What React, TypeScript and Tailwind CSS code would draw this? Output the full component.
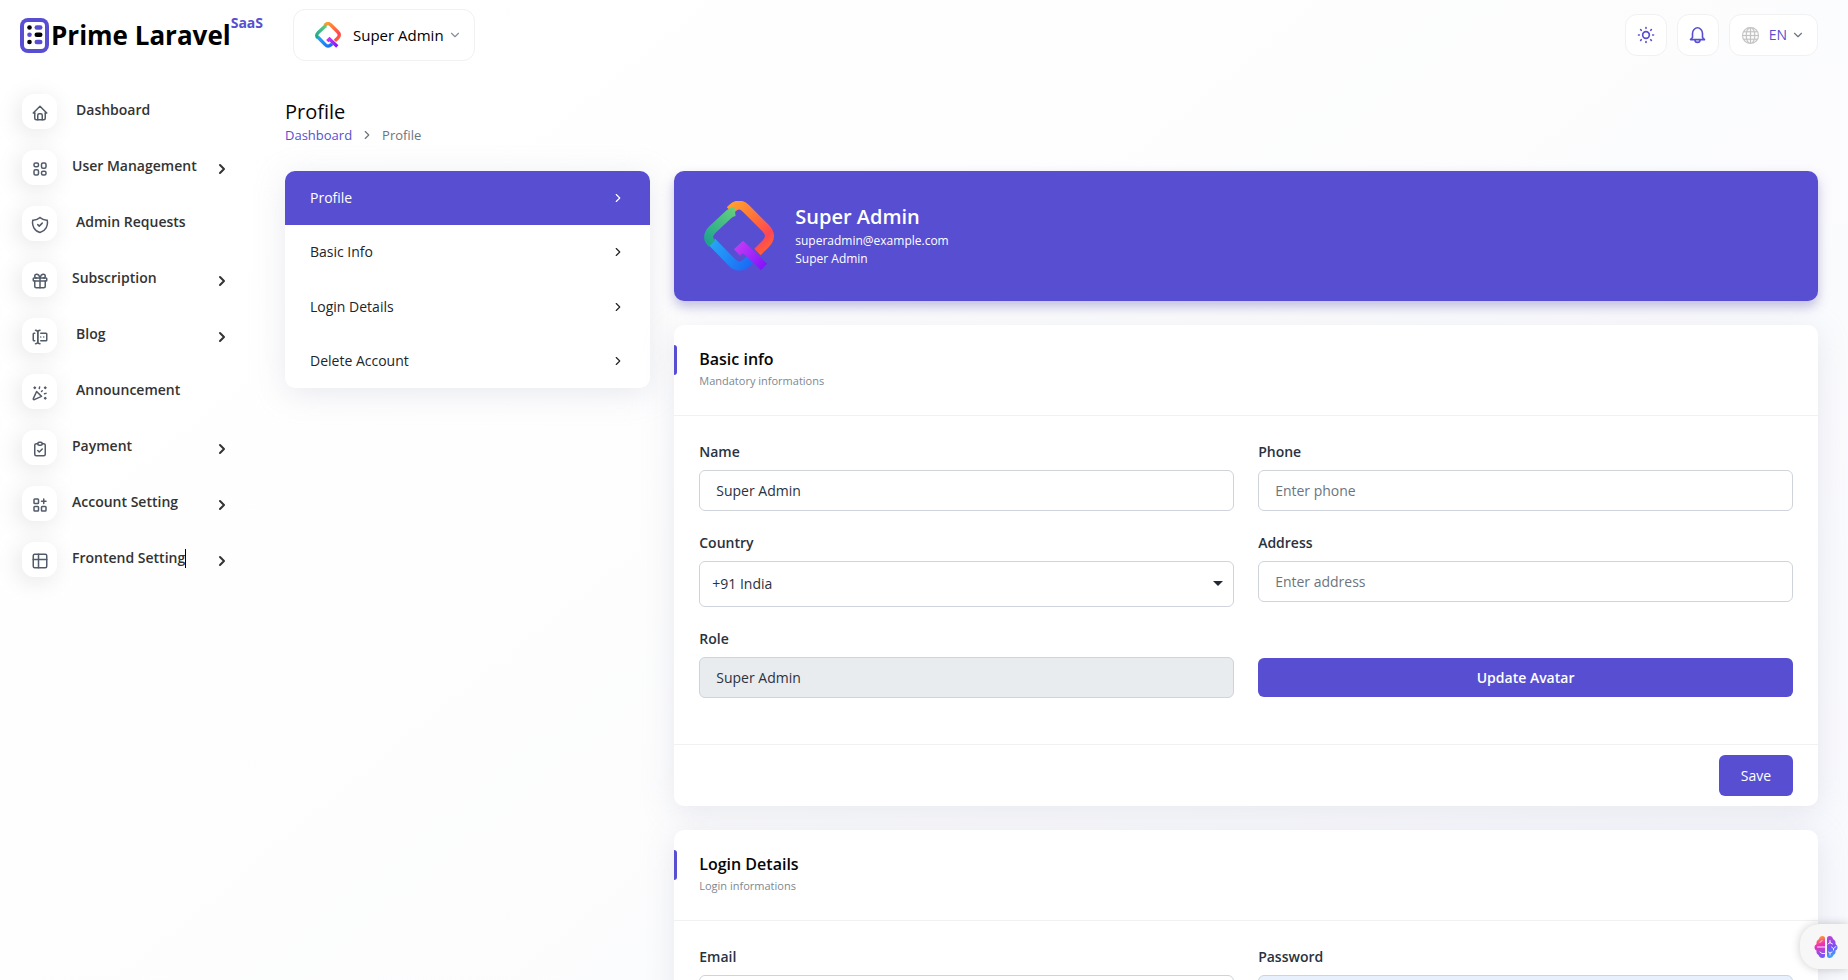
import { useId, useState } from 'react';
import type { ComponentType, ReactNode } from 'react';
import {
  TbApps,
  TbChevronDown,
  TbChevronRight,
  TbClipboardCheck,
  TbConfetti,
  TbForms,
  TbGift,
  TbHome,
  TbLayout2,
  TbSun,
  TbTable,
} from 'react-icons/tb';
import { BsGlobe } from 'react-icons/bs';

interface NavItem {
  label: string;
  icon: ComponentType<{ size?: number }>;
  hasChildren?: boolean;
  indent?: boolean;
  caret?: boolean;
}

const navItems: NavItem[] = [
  { label: 'Dashboard', icon: TbHome, indent: true },
  { label: 'User Management', icon: TbLayout2, hasChildren: true },
  { label: 'Admin Requests', icon: ShieldIcon, indent: true },
  { label: 'Subscription', icon: TbGift, hasChildren: true },
  { label: 'Blog', icon: TbForms, hasChildren: true, indent: true },
  { label: 'Announcement', icon: TbConfetti, indent: true },
  { label: 'Payment', icon: TbClipboardCheck, hasChildren: true },
  { label: 'Account Setting', icon: TbApps, hasChildren: true },
  { label: 'Frontend Setting', icon: TbTable, hasChildren: true, caret: true },
];

const sections = ['Profile', 'Basic Info', 'Login Details', 'Delete Account'];

const inputClass =
  'block h-[41px] w-full rounded-md border border-[#ced4da] bg-white px-4 text-sm text-[#293240] placeholder:text-[#6c757d] outline-none';

function ShieldIcon({ size = 18 }: { size?: number }) {
  return (
    <svg
      width={size}
      height={size}
      viewBox="0 0 24 24"
      fill="none"
      stroke="currentColor"
      strokeWidth="2"
      strokeLinecap="round"
      strokeLinejoin="round"
      aria-hidden="true"
    >
      <path d="M12 2a13 13 0 0 0 9.500 3.500a13.500 13.500 0 0 1 -9.500 16.500a13.500 13.500 0 0 1 -9.500 -16.500a13 13 0 0 0 9.500 -3.500" />
      <path d="M9 11.500l2 2l4 -4" />
    </svg>
  );
}

function BellIcon() {
  return (
    <svg
      width="17"
      height="18"
      viewBox="0 0 17 18"
      fill="none"
      stroke="currentColor"
      strokeWidth="1.6"
      strokeLinecap="round"
      strokeLinejoin="round"
      aria-hidden="true"
    >
      <path d="M3.500 11.500V7.500C3.500 4.500 6 1.800 8.500 1.800S13.500 4.500 13.500 7.500V11.500L15.500 13.600H1.500L3.500 11.500" />
      <path d="M6 14a2.500 2.400 0 0 0 5 0" />
    </svg>
  );
}

function BrandMark() {
  return (
    <svg width="29" height="35" viewBox="0 0 29 35" aria-hidden="true">
      <rect x="0" y="0" width="29" height="35" rx="8" fill="#584ed2" />
      <rect x="4" y="4" width="21" height="27" rx="4" fill="#fff" />
      <circle cx="9.5" cy="9.5" r="2.3" fill="#000" />
      <circle cx="9.5" cy="16.8" r="2.3" fill="#584ed2" />
      <circle cx="9.5" cy="24" r="2.3" fill="#000" />
      <rect x="14.5" y="7.2" width="8" height="4.6" rx="2.3" fill="#584ed2" />
      <rect x="14.5" y="14.5" width="8" height="4.6" rx="2.3" fill="#000" />
      <rect x="14.5" y="21.7" width="8" height="4.6" rx="2.3" fill="#584ed2" />
    </svg>
  );
}

function Avatar({ size }: { size: number }) {
  const id = useId();
  return (
    <svg width={size} height={size} viewBox="0 0 70 70" fill="none" strokeWidth="9" role="img" aria-label="Super Admin">
      <defs>
        <linearGradient id={`${id}o`} x1="26" y1="4" x2="64" y2="48" gradientUnits="userSpaceOnUse">
          <stop offset="0" stopColor="#ff9f2e" />
          <stop offset="0.5" stopColor="#ff6a3d" />
          <stop offset="0.8" stopColor="#ff4655" />
          <stop offset="1" stopColor="#ff6038" />
        </linearGradient>
        <linearGradient id={`${id}g`} x1="34" y1="8" x2="5" y2="42" gradientUnits="userSpaceOnUse">
          <stop offset="0" stopColor="#69d17c" />
          <stop offset="1" stopColor="#1fa58e" />
        </linearGradient>
        <linearGradient id={`${id}b`} x1="8" y1="40" x2="46" y2="64" gradientUnits="userSpaceOnUse">
          <stop offset="0" stopColor="#27a5f7" />
          <stop offset="1" stopColor="#1a6bf5" />
        </linearGradient>
        <linearGradient id={`${id}p`} x1="33" y1="46" x2="60" y2="66" gradientUnits="userSpaceOnUse">
          <stop offset="0" stopColor="#c03af5" />
          <stop offset="1" stopColor="#8413fa" />
        </linearGradient>
      </defs>
      <path d="M26 9.500 L28 7.500 Q35 0.500 42 7.500 L61.500 27 Q69.500 35 61.500 43 L53.500 51" stroke={`url(#${id}o)`} />
      <path d="M8 41 L27.500 61 Q35 69 43 61.500 L46 58.500" stroke={`url(#${id}b)`} />
      <path d="M31 10.500 Q27 11 24 14 L8.500 28.500 Q1 36 8 42.500" stroke={`url(#${id}g)`} />
      <path d="M33 51.500 L39 46 L60 66" stroke={`url(#${id}p)`} />
    </svg>
  );
}

function Brain() {
  return (
    <svg width="24" height="24" viewBox="0 0 24 24" fill="none" aria-hidden="true">
      <defs>
        <linearGradient id="brain-left" x1="3" y1="2" x2="9" y2="22" gradientUnits="userSpaceOnUse">
          <stop offset="0" stopColor="#ff9d2f" />
          <stop offset="0.4" stopColor="#f02fb4" />
          <stop offset="1" stopColor="#6b5cff" />
        </linearGradient>
        <linearGradient id="brain-right" x1="14" y1="2" x2="21" y2="22" gradientUnits="userSpaceOnUse">
          <stop offset="0" stopColor="#c13fd6" />
          <stop offset="0.5" stopColor="#7a52f4" />
          <stop offset="1" stopColor="#2fb0ff" />
        </linearGradient>
      </defs>
      <path
        d="M11 3.500 Q11 1 8.500 1 Q5.500 1 5 4 Q2 5.500 2.500 9 Q0 10.500 0.500 13 Q1 15 2.500 15.500 Q2 18.500 4.500 20 Q5.500 23 8.500 23 Q11 23 11 20.500 Z"
        fill="url(#brain-left)"
      />
      <path
        d="M13 3.500 Q13 1 15.500 1 Q18.500 1 19 4 Q22 5.500 21.500 9 Q24 10.500 23.500 13 Q23 15 21.500 15.500 Q22 18.500 19.500 20 Q18.500 23 15.500 23 Q13 23 13 20.500 Z"
        fill="url(#brain-right)"
      />
      <path
        d="M6 7.500 L8 5.500 M3.500 12 H11 M6 17 L8 18.500 H11 M16 5.500 V8 M14 9 L16 7.500 L18.500 9 M17.500 12 L19.500 13.500 L22 11.500 M19.500 13.500 V15 M14.500 17 L16 18 L18 17 M16 18 V20"
        stroke="#f3e8ff"
        strokeWidth="1"
        strokeLinecap="round"
      />
    </svg>
  );
}

function Header() {
  return (
    <header className="flex h-[70px] items-start justify-between pl-5 pr-[30px]">
      <div className="flex">
        <a href="#" className="mt-[18px] flex h-[35px] w-[273px] items-center text-black">
          <BrandMark />
          <span className="pl-[2px] text-[26px] font-bold leading-[35px]">Prime Laravel</span>
          <sup className="-top-[13px] text-sm font-bold leading-4 text-[#584ed2]">SaaS</sup>
        </a>
        <button className="mt-[9px] flex h-[52px] items-center rounded-xl border border-[#f1f1f1] bg-white pl-[21px] pr-3 text-[15px] font-medium text-black">
          <Avatar size={26} />
          <span className="pl-3 pr-1">Super Admin</span>
          <TbChevronDown size={14} className="text-[#8a8f98]" />
        </button>
      </div>
      <div className="mt-[14px] flex gap-[10px] text-[#584ed2]">
        <button
          aria-label="Theme"
          className="flex h-[42px] w-[42px] items-center justify-center rounded-xl border border-[#f1f1f1] bg-white"
        >
          <TbSun size={20} />
        </button>
        <button
          aria-label="Notifications"
          className="flex h-[42px] w-[42px] items-center justify-center rounded-xl border border-[#f1f1f1] bg-white"
        >
          <BellIcon />
        </button>
        <button className="flex h-[42px] items-center rounded-xl border border-[#f1f1f1] bg-white px-3 text-sm">
          <BsGlobe size={17} strokeWidth={0.2} className="text-[#c4c4c4]" />
          <span className="pl-[10px] pr-1">EN</span>
          <TbChevronDown size={14} className="text-[#6c757d]" />
        </button>
      </div>
    </header>
  );
}

function Sidebar() {
  return (
    <nav className="w-[285px] shrink-0 pl-[22px] pt-6">
      <ul className="flex flex-col gap-[21px]">
        {navItems.map((item) => {
          const Icon = item.icon;
          return (
            <li key={item.label}>
              <a href="#" className="flex h-[35px] w-[208px] items-start text-[#333]">
                <span className="flex h-[35px] w-[35px] items-center justify-center rounded-xl bg-white pt-[3px] text-[#525b69] shadow-[-3px_4px_23px_rgba(0,0,0,0.1)]">
                  <Icon size={18} />
                </span>
                <span
                  className={
                    item.indent
                      ? 'flex flex-1 items-center pl-[19px] text-sm font-semibold leading-8'
                      : 'flex flex-1 items-center pl-[15px] text-sm font-semibold leading-8'
                  }
                >
                  {item.label}
                  {item.caret && <span className="h-[19px] w-px bg-black" />}
                </span>
                {item.hasChildren && (
                  <span className="flex h-[38px] items-center">
                    <TbChevronRight size={16} strokeWidth={3} />
                  </span>
                )}
              </a>
            </li>
          );
        })}
      </ul>
    </nav>
  );
}

function SectionMenu() {
  const [active, setActive] = useState('Profile');

  return (
    <div className="grid min-h-[217px] auto-rows-fr overflow-hidden rounded-[10px] bg-white shadow-[0_6px_30px_rgba(182,186,203,0.3)]">
      {sections.map((section) => (
        <a
          key={section}
          href="#"
          onClick={() => setActive(section)}
          className={
            active === section
              ? 'flex items-center justify-between bg-[#584ed2] px-[25px] text-sm text-white'
              : 'flex items-center justify-between px-[25px] text-sm text-[#212529]'
          }
        >
          {section}
          <TbChevronRight size={14} />
        </a>
      ))}
    </div>
  );
}

function Field({ label, id, children }: { label: string; id: string; children: ReactNode }) {
  return (
    <div>
      <label htmlFor={id} className="mb-2 block text-sm font-semibold leading-[21px] text-[#293240]">
        {label}
      </label>
      {children}
    </div>
  );
}

function Card({ title, subtitle, children }: { title: string; subtitle: string; children: ReactNode }) {
  return (
    <section className="rounded-[10px] bg-white shadow-[0_6px_30px_rgba(182,186,203,0.3)]">
      <div className="flex border-b border-[#f1f1f1] pb-6 pt-5">
        <span className="h-[30px] w-[3px] rounded-r-sm bg-[#584ed2]" />
        <div className="pl-[22px] pt-[3px]">
          <h2 className="text-base font-semibold leading-[22px] text-[#060606]">{title}</h2>
          <p className="text-[11px] leading-[21px] text-[#7e8790]">{subtitle}</p>
        </div>
      </div>
      {children}
    </section>
  );
}

function BasicInfo() {
  const [name, setName] = useState('Super Admin');

  return (
    <Card title="Basic info" subtitle="Mandatory informations">
      <div className="grid grid-cols-2 gap-x-6 gap-y-[21px] px-[25px] pb-[46px] pt-[25px]">
        <Field label="Name" id="name">
          <input id="name" className={inputClass} value={name} onChange={(e) => setName(e.target.value)} />
        </Field>
        <Field label="Phone" id="phone">
          <input id="phone" className={inputClass} placeholder="Enter phone" />
        </Field>
        <Field label="Country" id="country">
          <div className="relative">
            <select
              id="country"
              className="block h-[46px] w-full appearance-none rounded-md border border-[#ced4da] bg-white px-3 text-sm text-[#293240] outline-none"
            >
              <option>+91 India</option>
            </select>
            <svg
              className="pointer-events-none absolute right-[11px] top-5"
              width="10"
              height="5"
              viewBox="0 0 10 5"
              fill="#212936"
            >
              <path d="M0 0h10l-5 5z" />
            </svg>
          </div>
        </Field>
        <Field label="Address" id="address">
          <input id="address" className={inputClass} placeholder="Enter address" />
        </Field>
        <Field label="Role" id="role">
          <input
            id="role"
            disabled
            value="Super Admin"
            className="block h-[41px] w-full rounded-md border border-[#ced4da] bg-[#e9ecef] px-4 text-sm text-[#293240]"
          />
        </Field>
        <div className="flex items-end pb-px">
          <button className="h-[39px] w-full rounded-md bg-[#584ed2] text-sm font-semibold text-white">
            Update Avatar
          </button>
        </div>
      </div>
      <div className="flex justify-end border-t border-[#f1f1f1] px-[25px] py-[10px]">
        <button className="h-[41px] w-[74px] rounded-md bg-[#584ed2] text-sm font-medium text-white">Save</button>
      </div>
    </Card>
  );
}

function LoginDetails() {
  return (
    <Card title="Login Details" subtitle="Login informations">
      <div className="grid grid-cols-2 gap-x-6 px-[25px] py-[25px]">
        <Field label="Email" id="email">
          <input id="email" className={inputClass} defaultValue="superadmin@example.com" />
        </Field>
        <Field label="Password" id="password">
          <input
            id="password"
            type="password"
            defaultValue="password"
            className="block h-[41px] w-full rounded-md border border-[#ced4da] bg-[#e8f0fe] px-4 text-sm text-[#293240] outline-none"
          />
        </Field>
      </div>
    </Card>
  );
}

export default function App() {
  return (
    <div className="h-screen overflow-hidden bg-[linear-gradient(141deg,#fff_3%,#fefefe_35%,#f8f9fd_100%)] font-['Open_Sans',sans-serif]">
      <Header />
      <div className="flex">
        <Sidebar />
        <main className="min-w-0 flex-1 pr-[30px] pt-[27px]">
          <h1 className="text-xl font-medium leading-[30px] text-[#060606]">Profile</h1>
          <div className="flex items-center text-[13px] leading-4">
            <a href="#" className="text-[#584ed2]">
              Dashboard
            </a>
            <TbChevronRight size={14} className="mx-2 text-[#6c757d]" />
            <span className="text-[#6c757d]">Profile</span>
          </div>
          <div className="mt-7 grid grid-cols-4 items-start gap-6">
            <SectionMenu />
            <div className="col-span-3 flex flex-col gap-6">
              <div className="flex h-[130px] items-center rounded-[10px] bg-[#584ed2] px-[30px] text-white shadow-[0_6px_12px_rgba(84,76,170,0.35)]">
                <Avatar size={70} />
                <div className="pb-[3px] pl-[21px]">
                  <h2 className="text-xl font-semibold leading-[30px]">Super Admin</h2>
                  <p className="text-xs leading-[18px]">superadmin@example.com</p>
                  <p className="text-xs leading-[18px]">Super Admin</p>
                </div>
              </div>
              <BasicInfo />
              <LoginDetails />
            </div>
          </div>
        </main>
      </div>
      <button
        aria-label="Assistant"
        className="fixed bottom-[11px] right-0 flex h-[45px] w-12 items-center rounded-l-[20px] bg-[#f7f7f8] pl-[14px] shadow-[0_0_10px_rgba(0,0,0,0.2)]"
      >
        <Brain />
      </button>
    </div>
  );
}
